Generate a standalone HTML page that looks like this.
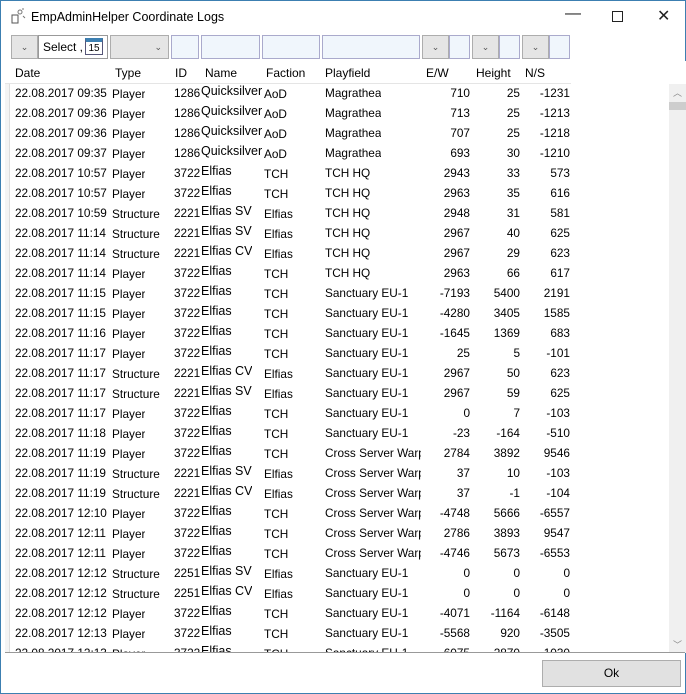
<!DOCTYPE html>
<html><head><meta charset="utf-8"><style>
*{margin:0;padding:0;box-sizing:border-box}
body{width:686px;height:694px;background:#fff;font-family:"Liberation Sans",sans-serif;font-size:12px;color:#000;position:relative;overflow:hidden}
.win{position:absolute;left:0;top:0;width:686px;height:694px;border:1px solid #3c7fb1;background:#fff}
.title{position:absolute;left:30px;top:9px;font-size:12.5px}
.ctl{position:absolute;top:6px;font-size:16px;color:#222}
.filt{position:absolute;top:34px;height:24px;border:1px solid #aac;background:#f0f6fc}
.cb{position:absolute;top:34px;height:24px;border:1px solid #adadad;background:#e5e5e5;font-size:9px;color:#555;text-align:center;line-height:22px}
.grid{position:absolute;left:4px;top:60px;width:681px;height:592px;overflow:hidden;background:#fff}
.hdr{position:absolute;left:0;top:0;width:566px;height:23px;background:#fff;border-bottom:1px solid #e5e5e5}
.hdr span{position:absolute;top:5px}
.row{position:absolute;left:0;height:20px;width:664px;font-size:11.8px}
.row span{position:absolute;top:2px;white-space:nowrap;overflow:hidden}
.row .n{top:0px;font-size:12.5px}
.row .t{top:3px}
.r{text-align:right}
.lh{position:absolute;left:0;top:23px;width:5px;height:570px;border-right:1px solid #ddd;background:#f4f4f4}
.sb{position:absolute;left:664px;top:23px;width:17px;height:569px;background:#f0f0f0}
.ok{position:absolute;left:541px;top:659px;width:139px;height:27px;border:1px solid #adadad;background:#e1e1e1;text-align:center;line-height:25px}
</style></head><body><div class="win">
<svg style="position:absolute;left:10px;top:7px" width="16" height="16"><rect x="1" y="7" width="6" height="8" fill="none" stroke="#555"/><circle cx="9" cy="4" r="2" fill="none" stroke="#777"/><path d="M12 8 l2 2 M11 1 l2 0" stroke="#777"/></svg>
<div class="title">EmpAdminHelper Coordinate Logs</div>
<div class="ctl" style="left:564px;top:4px">—</div>
<div style="position:absolute;left:611px;top:10px;width:11px;height:11px;border:1px solid #222"></div>
<div class="ctl" style="left:656px;top:5px">✕</div>
<div class="cb" style="left:10px;width:27px">⌄</div>
<div class="filt" style="left:37px;width:70px;background:#fff;border-color:#999"><span style="position:absolute;left:4px;top:4px">Select ,</span><span style="position:absolute;left:46px;top:2px;width:18px;height:17px;border:1px solid #557;font-size:10px;text-align:center;line-height:14px;border-top:4px solid #3c7fb1">15</span></div>
<div class="cb" style="left:109px;width:59px;text-align:right;padding-right:6px">⌄</div>
<div class="filt" style="left:170px;width:28px"></div>
<div class="filt" style="left:200px;width:59px"></div>
<div class="filt" style="left:261px;width:58px"></div>
<div class="filt" style="left:321px;width:98px"></div>
<div class="cb" style="left:421px;width:27px">⌄</div><div class="filt" style="left:448px;width:21px"></div>
<div class="cb" style="left:471px;width:27px">⌄</div><div class="filt" style="left:498px;width:21px"></div>
<div class="cb" style="left:521px;width:27px">⌄</div><div class="filt" style="left:548px;width:21px"></div>
<div class="grid">
<div class="hdr"><span style="left:10px">Date</span><span style="left:110px">Type</span><span style="left:170px">ID</span><span style="left:200px">Name</span><span style="left:261px">Faction</span><span style="left:320px">Playfield</span><span style="left:421px">E/W</span><span style="left:471px">Height</span><span style="left:520px">N/S</span></div>
<div class="lh"></div>
<div class="sb"><div style="position:absolute;left:4px;top:2px;font-size:9px;color:#888">︿</div><div style="position:absolute;left:0;top:18px;width:17px;height:8px;background:#cdcdcd"></div><div style="position:absolute;left:4px;top:554px;font-size:9px;color:#888">﹀</div></div>
<div id="rows">
<div class="row" style="top:23px"><span style="left:10px">22.08.2017 09:35</span><span class="t" style="left:107px">Player</span><span style="left:169px;width:26px">1286</span><span class="n" style="left:196px">Quicksilver</span><span class="t" style="left:259px">AoD</span><span style="left:320px">Magrathea</span><span class="r" style="right:199px">710</span><span class="r" style="right:149px">25</span><span class="r" style="right:99px">-1231</span></div>
<div class="row" style="top:43px"><span style="left:10px">22.08.2017 09:36</span><span class="t" style="left:107px">Player</span><span style="left:169px;width:26px">1286</span><span class="n" style="left:196px">Quicksilver</span><span class="t" style="left:259px">AoD</span><span style="left:320px">Magrathea</span><span class="r" style="right:199px">713</span><span class="r" style="right:149px">25</span><span class="r" style="right:99px">-1213</span></div>
<div class="row" style="top:63px"><span style="left:10px">22.08.2017 09:36</span><span class="t" style="left:107px">Player</span><span style="left:169px;width:26px">1286</span><span class="n" style="left:196px">Quicksilver</span><span class="t" style="left:259px">AoD</span><span style="left:320px">Magrathea</span><span class="r" style="right:199px">707</span><span class="r" style="right:149px">25</span><span class="r" style="right:99px">-1218</span></div>
<div class="row" style="top:83px"><span style="left:10px">22.08.2017 09:37</span><span class="t" style="left:107px">Player</span><span style="left:169px;width:26px">1286</span><span class="n" style="left:196px">Quicksilver</span><span class="t" style="left:259px">AoD</span><span style="left:320px">Magrathea</span><span class="r" style="right:199px">693</span><span class="r" style="right:149px">30</span><span class="r" style="right:99px">-1210</span></div>
<div class="row" style="top:103px"><span style="left:10px">22.08.2017 10:57</span><span class="t" style="left:107px">Player</span><span style="left:169px;width:26px">3722</span><span class="n" style="left:196px">Elfias</span><span class="t" style="left:259px">TCH</span><span style="left:320px">TCH HQ</span><span class="r" style="right:199px">2943</span><span class="r" style="right:149px">33</span><span class="r" style="right:99px">573</span></div>
<div class="row" style="top:123px"><span style="left:10px">22.08.2017 10:57</span><span class="t" style="left:107px">Player</span><span style="left:169px;width:26px">3722</span><span class="n" style="left:196px">Elfias</span><span class="t" style="left:259px">TCH</span><span style="left:320px">TCH HQ</span><span class="r" style="right:199px">2963</span><span class="r" style="right:149px">35</span><span class="r" style="right:99px">616</span></div>
<div class="row" style="top:143px"><span style="left:10px">22.08.2017 10:59</span><span class="t" style="left:107px">Structure</span><span style="left:169px;width:26px">2221</span><span class="n" style="left:196px">Elfias SV</span><span class="t" style="left:259px">Elfias</span><span style="left:320px">TCH HQ</span><span class="r" style="right:199px">2948</span><span class="r" style="right:149px">31</span><span class="r" style="right:99px">581</span></div>
<div class="row" style="top:163px"><span style="left:10px">22.08.2017 11:14</span><span class="t" style="left:107px">Structure</span><span style="left:169px;width:26px">2221</span><span class="n" style="left:196px">Elfias SV</span><span class="t" style="left:259px">Elfias</span><span style="left:320px">TCH HQ</span><span class="r" style="right:199px">2967</span><span class="r" style="right:149px">40</span><span class="r" style="right:99px">625</span></div>
<div class="row" style="top:183px"><span style="left:10px">22.08.2017 11:14</span><span class="t" style="left:107px">Structure</span><span style="left:169px;width:26px">2221</span><span class="n" style="left:196px">Elfias CV</span><span class="t" style="left:259px">Elfias</span><span style="left:320px">TCH HQ</span><span class="r" style="right:199px">2967</span><span class="r" style="right:149px">29</span><span class="r" style="right:99px">623</span></div>
<div class="row" style="top:203px"><span style="left:10px">22.08.2017 11:14</span><span class="t" style="left:107px">Player</span><span style="left:169px;width:26px">3722</span><span class="n" style="left:196px">Elfias</span><span class="t" style="left:259px">TCH</span><span style="left:320px">TCH HQ</span><span class="r" style="right:199px">2963</span><span class="r" style="right:149px">66</span><span class="r" style="right:99px">617</span></div>
<div class="row" style="top:223px"><span style="left:10px">22.08.2017 11:15</span><span class="t" style="left:107px">Player</span><span style="left:169px;width:26px">3722</span><span class="n" style="left:196px">Elfias</span><span class="t" style="left:259px">TCH</span><span style="left:320px">Sanctuary EU-1</span><span class="r" style="right:199px">-7193</span><span class="r" style="right:149px">5400</span><span class="r" style="right:99px">2191</span></div>
<div class="row" style="top:243px"><span style="left:10px">22.08.2017 11:15</span><span class="t" style="left:107px">Player</span><span style="left:169px;width:26px">3722</span><span class="n" style="left:196px">Elfias</span><span class="t" style="left:259px">TCH</span><span style="left:320px">Sanctuary EU-1</span><span class="r" style="right:199px">-4280</span><span class="r" style="right:149px">3405</span><span class="r" style="right:99px">1585</span></div>
<div class="row" style="top:263px"><span style="left:10px">22.08.2017 11:16</span><span class="t" style="left:107px">Player</span><span style="left:169px;width:26px">3722</span><span class="n" style="left:196px">Elfias</span><span class="t" style="left:259px">TCH</span><span style="left:320px">Sanctuary EU-1</span><span class="r" style="right:199px">-1645</span><span class="r" style="right:149px">1369</span><span class="r" style="right:99px">683</span></div>
<div class="row" style="top:283px"><span style="left:10px">22.08.2017 11:17</span><span class="t" style="left:107px">Player</span><span style="left:169px;width:26px">3722</span><span class="n" style="left:196px">Elfias</span><span class="t" style="left:259px">TCH</span><span style="left:320px">Sanctuary EU-1</span><span class="r" style="right:199px">25</span><span class="r" style="right:149px">5</span><span class="r" style="right:99px">-101</span></div>
<div class="row" style="top:303px"><span style="left:10px">22.08.2017 11:17</span><span class="t" style="left:107px">Structure</span><span style="left:169px;width:26px">2221</span><span class="n" style="left:196px">Elfias CV</span><span class="t" style="left:259px">Elfias</span><span style="left:320px">Sanctuary EU-1</span><span class="r" style="right:199px">2967</span><span class="r" style="right:149px">50</span><span class="r" style="right:99px">623</span></div>
<div class="row" style="top:323px"><span style="left:10px">22.08.2017 11:17</span><span class="t" style="left:107px">Structure</span><span style="left:169px;width:26px">2221</span><span class="n" style="left:196px">Elfias SV</span><span class="t" style="left:259px">Elfias</span><span style="left:320px">Sanctuary EU-1</span><span class="r" style="right:199px">2967</span><span class="r" style="right:149px">59</span><span class="r" style="right:99px">625</span></div>
<div class="row" style="top:343px"><span style="left:10px">22.08.2017 11:17</span><span class="t" style="left:107px">Player</span><span style="left:169px;width:26px">3722</span><span class="n" style="left:196px">Elfias</span><span class="t" style="left:259px">TCH</span><span style="left:320px">Sanctuary EU-1</span><span class="r" style="right:199px">0</span><span class="r" style="right:149px">7</span><span class="r" style="right:99px">-103</span></div>
<div class="row" style="top:363px"><span style="left:10px">22.08.2017 11:18</span><span class="t" style="left:107px">Player</span><span style="left:169px;width:26px">3722</span><span class="n" style="left:196px">Elfias</span><span class="t" style="left:259px">TCH</span><span style="left:320px">Sanctuary EU-1</span><span class="r" style="right:199px">-23</span><span class="r" style="right:149px">-164</span><span class="r" style="right:99px">-510</span></div>
<div class="row" style="top:383px"><span style="left:10px">22.08.2017 11:19</span><span class="t" style="left:107px">Player</span><span style="left:169px;width:26px">3722</span><span class="n" style="left:196px">Elfias</span><span class="t" style="left:259px">TCH</span><span style="left:320px;width:96px">Cross Server Warp</span><span class="r" style="right:199px">2784</span><span class="r" style="right:149px">3892</span><span class="r" style="right:99px">9546</span></div>
<div class="row" style="top:403px"><span style="left:10px">22.08.2017 11:19</span><span class="t" style="left:107px">Structure</span><span style="left:169px;width:26px">2221</span><span class="n" style="left:196px">Elfias SV</span><span class="t" style="left:259px">Elfias</span><span style="left:320px;width:96px">Cross Server Warp</span><span class="r" style="right:199px">37</span><span class="r" style="right:149px">10</span><span class="r" style="right:99px">-103</span></div>
<div class="row" style="top:423px"><span style="left:10px">22.08.2017 11:19</span><span class="t" style="left:107px">Structure</span><span style="left:169px;width:26px">2221</span><span class="n" style="left:196px">Elfias CV</span><span class="t" style="left:259px">Elfias</span><span style="left:320px;width:96px">Cross Server Warp</span><span class="r" style="right:199px">37</span><span class="r" style="right:149px">-1</span><span class="r" style="right:99px">-104</span></div>
<div class="row" style="top:443px"><span style="left:10px">22.08.2017 12:10</span><span class="t" style="left:107px">Player</span><span style="left:169px;width:26px">3722</span><span class="n" style="left:196px">Elfias</span><span class="t" style="left:259px">TCH</span><span style="left:320px;width:96px">Cross Server Warp</span><span class="r" style="right:199px">-4748</span><span class="r" style="right:149px">5666</span><span class="r" style="right:99px">-6557</span></div>
<div class="row" style="top:463px"><span style="left:10px">22.08.2017 12:11</span><span class="t" style="left:107px">Player</span><span style="left:169px;width:26px">3722</span><span class="n" style="left:196px">Elfias</span><span class="t" style="left:259px">TCH</span><span style="left:320px;width:96px">Cross Server Warp</span><span class="r" style="right:199px">2786</span><span class="r" style="right:149px">3893</span><span class="r" style="right:99px">9547</span></div>
<div class="row" style="top:483px"><span style="left:10px">22.08.2017 12:11</span><span class="t" style="left:107px">Player</span><span style="left:169px;width:26px">3722</span><span class="n" style="left:196px">Elfias</span><span class="t" style="left:259px">TCH</span><span style="left:320px;width:96px">Cross Server Warp</span><span class="r" style="right:199px">-4746</span><span class="r" style="right:149px">5673</span><span class="r" style="right:99px">-6553</span></div>
<div class="row" style="top:503px"><span style="left:10px">22.08.2017 12:12</span><span class="t" style="left:107px">Structure</span><span style="left:169px;width:26px">2251</span><span class="n" style="left:196px">Elfias SV</span><span class="t" style="left:259px">Elfias</span><span style="left:320px">Sanctuary EU-1</span><span class="r" style="right:199px">0</span><span class="r" style="right:149px">0</span><span class="r" style="right:99px">0</span></div>
<div class="row" style="top:523px"><span style="left:10px">22.08.2017 12:12</span><span class="t" style="left:107px">Structure</span><span style="left:169px;width:26px">2251</span><span class="n" style="left:196px">Elfias CV</span><span class="t" style="left:259px">Elfias</span><span style="left:320px">Sanctuary EU-1</span><span class="r" style="right:199px">0</span><span class="r" style="right:149px">0</span><span class="r" style="right:99px">0</span></div>
<div class="row" style="top:543px"><span style="left:10px">22.08.2017 12:12</span><span class="t" style="left:107px">Player</span><span style="left:169px;width:26px">3722</span><span class="n" style="left:196px">Elfias</span><span class="t" style="left:259px">TCH</span><span style="left:320px">Sanctuary EU-1</span><span class="r" style="right:199px">-4071</span><span class="r" style="right:149px">-1164</span><span class="r" style="right:99px">-6148</span></div>
<div class="row" style="top:563px"><span style="left:10px">22.08.2017 12:13</span><span class="t" style="left:107px">Player</span><span style="left:169px;width:26px">3722</span><span class="n" style="left:196px">Elfias</span><span class="t" style="left:259px">TCH</span><span style="left:320px">Sanctuary EU-1</span><span class="r" style="right:199px">-5568</span><span class="r" style="right:149px">920</span><span class="r" style="right:99px">-3505</span></div>
<div class="row" style="top:583px"><span style="left:10px">22.08.2017 12:13</span><span class="t" style="left:107px">Player</span><span style="left:169px;width:26px">3722</span><span class="n" style="left:196px">Elfias</span><span class="t" style="left:259px">TCH</span><span style="left:320px">Sanctuary EU-1</span><span class="r" style="right:199px">-6075</span><span class="r" style="right:149px">2870</span><span class="r" style="right:99px">-1030</span></div>
</div>
</div>
<div style="position:absolute;left:4px;top:651px;width:680px;height:1px;background:#999"></div>
<div class="ok">Ok</div>
</div></body></html>
